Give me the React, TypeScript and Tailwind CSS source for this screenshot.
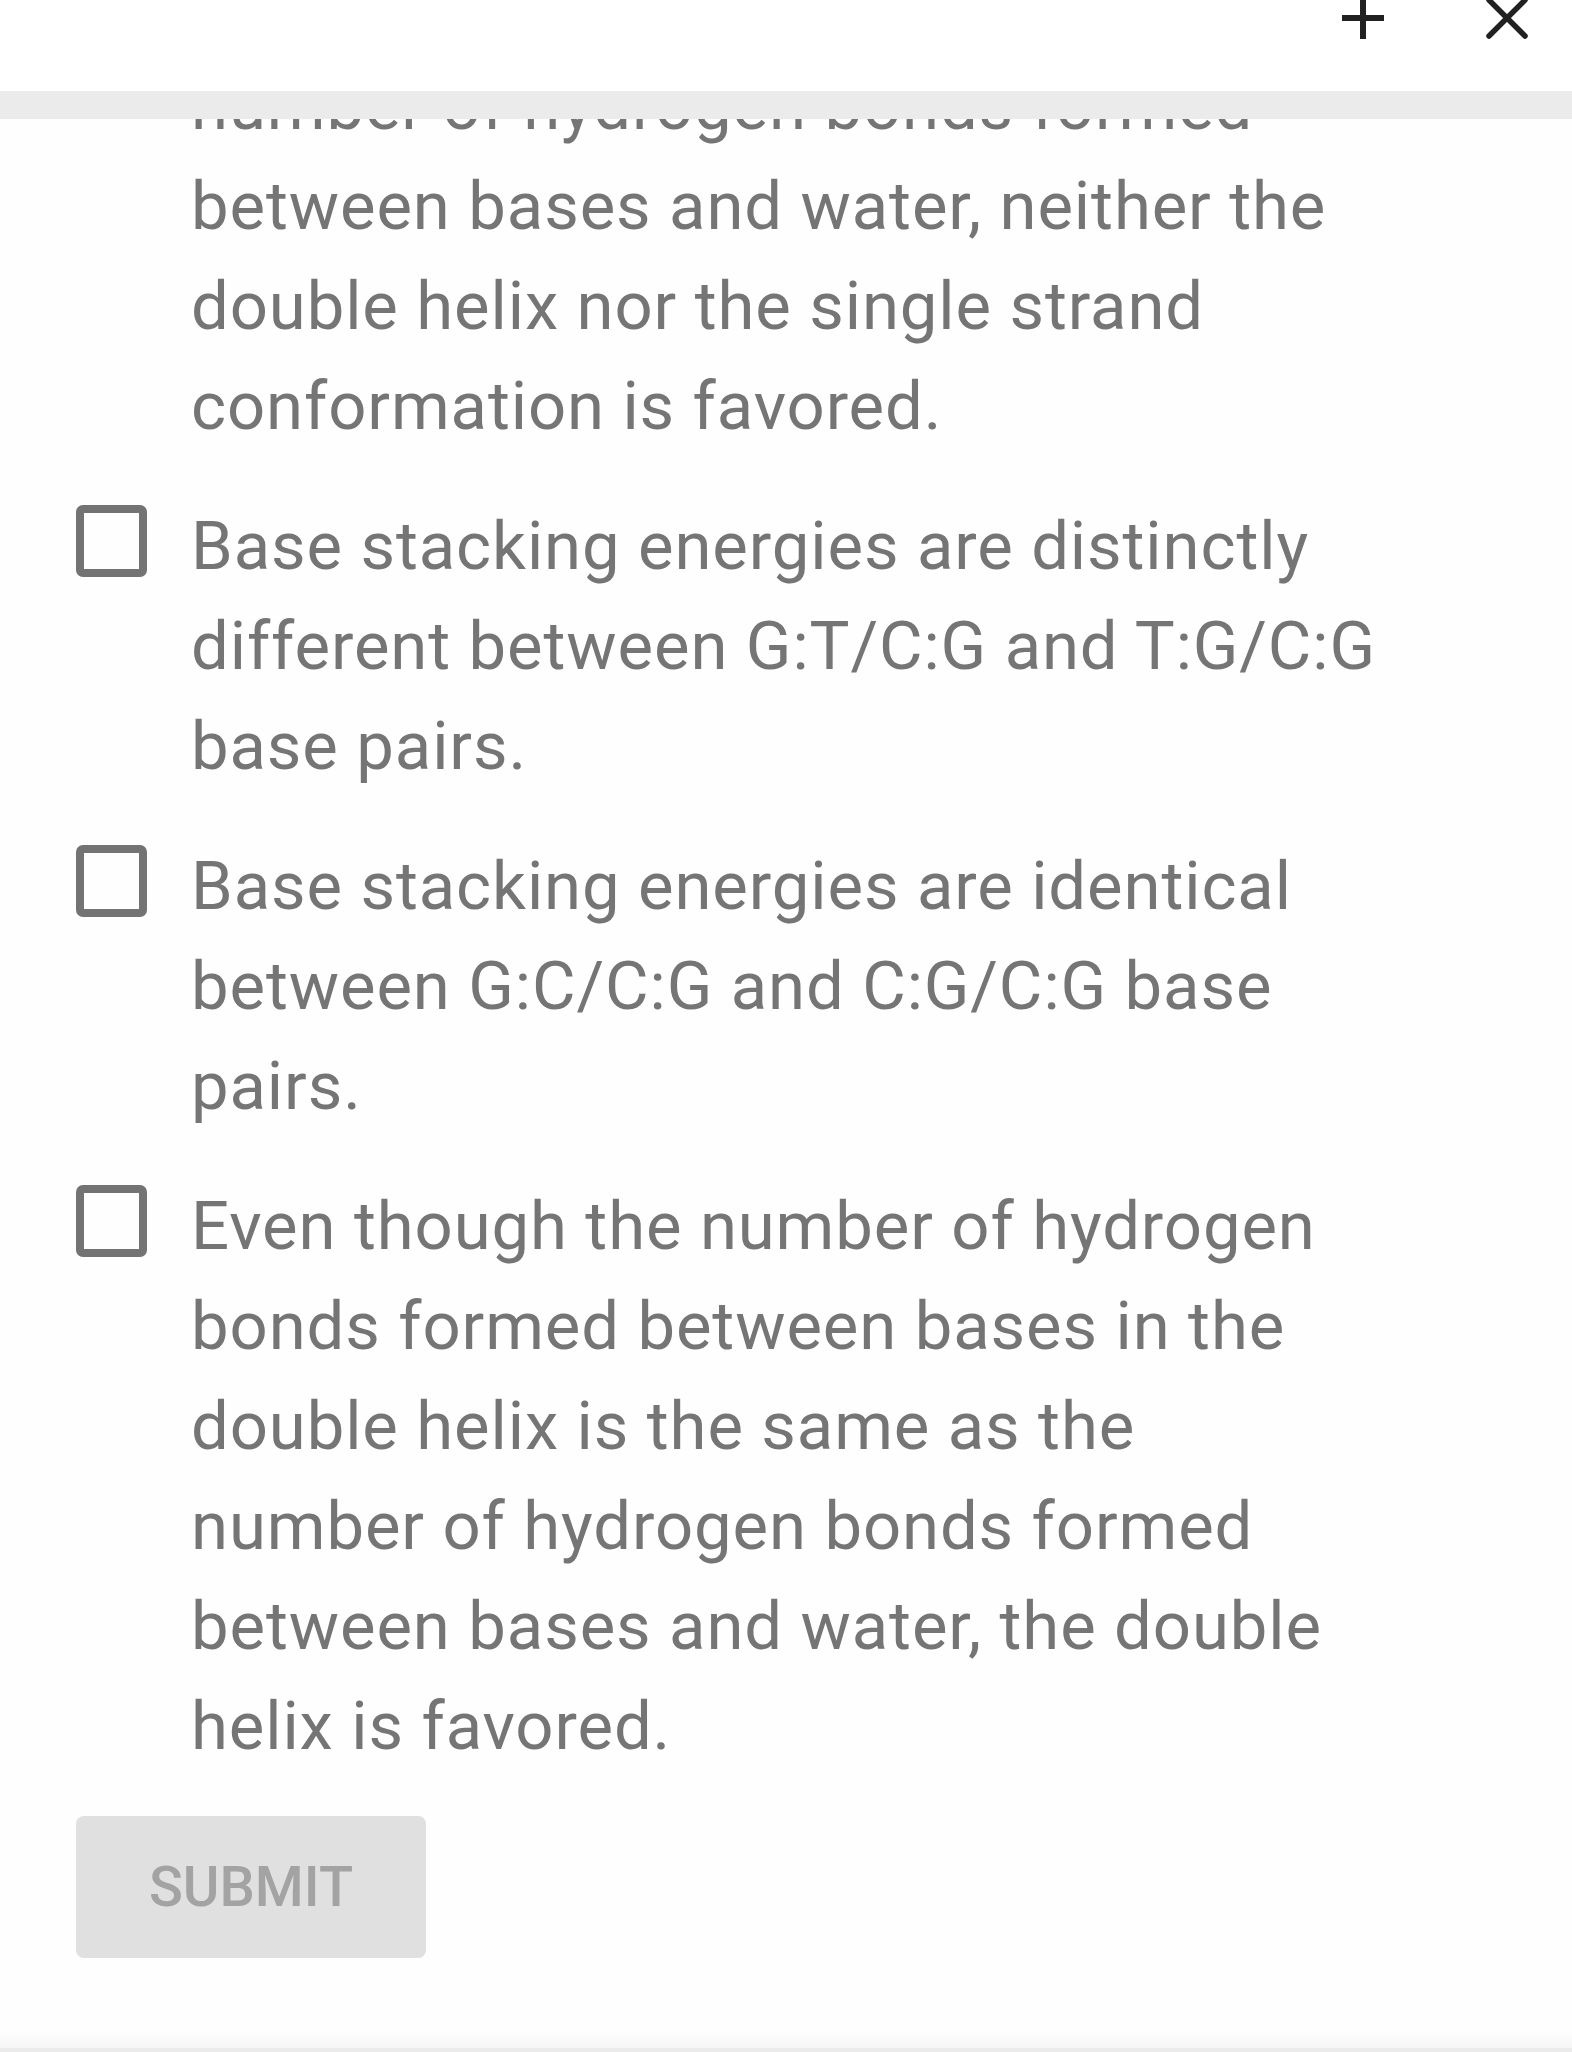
import React from "react"

const OPTIONS = [
  "Even though the number of hydrogen bonds formed between bases in the double helix is the same as the number of hydrogen bonds formed between bases and water, neither the double helix nor the single strand conformation is favored.",
  "Base stacking energies are distinctly different between G:T/C:G and T:G/C:G base pairs.",
  "Base stacking energies are identical between G:C/C:G and C:G/C:G base pairs.",
  "Even though the number of hydrogen bonds formed between bases in the double helix is the same as the number of hydrogen bonds formed between bases and water, the double helix is favored.",
]

function Checkbox() {
  return (
    <div className="mt-[9px] h-[72px] w-[71px] shrink-0 rounded-[7px] border-[8px] border-[#737373]" />
  )
}

function Option({ text }: { text: string }) {
  return (
    <label className="flex items-start gap-[44px]">
      <Checkbox />
      <span className="w-[1188px] text-[67px] leading-[100px] tracking-[0.9px] text-[#757575]">{text}</span>
    </label>
  )
}

export default function App() {
  return (
    <div
      className="relative h-[2052px] w-full overflow-hidden bg-[#fefefe]"
      style={{ fontFamily: "Roboto, 'Noto Sans', sans-serif" }}
    >
      {/* scrolled list, first lines sit under the toolbar */}
      <div className="mt-[-244px] flex flex-col gap-[40px] pl-[76px]">
        {OPTIONS.map((o, i) => (
          <Option key={i} text={o} />
        ))}
        <div>
          <button
            type="button"
            disabled
            className="h-[142px] w-[350px] rounded-[8px] bg-[#e0e0e0] text-[56px] font-medium text-[#a3a3a3]"
          >
            SUBMIT
          </button>
        </div>
      </div>

      {/* toolbar overlay */}
      <div className="absolute inset-x-0 top-0">
        <div className="relative h-[91px] bg-white">
          <svg className="absolute left-[1342px] top-[-3px]" width="42" height="42" viewBox="0 0 42 42">
            <path d="M0 21H42M21 0V42" stroke="#212121" strokeWidth="6" fill="none" />
          </svg>
          <svg className="absolute left-[1485px] top-[-4px]" width="44" height="44" viewBox="0 0 44 44">
            <path d="M4 4L40 40M40 4L4 40" stroke="#212121" strokeWidth="5.5" strokeLinecap="round" fill="none" />
          </svg>
        </div>
        <div className="h-[28px] bg-[#ebebeb]" />
      </div>

      {/* bottom edge */}
      <div className="absolute inset-x-0 bottom-0">
        <div className="h-[16px] bg-gradient-to-b from-[#fefefe] to-[#f5f5f5]" />
        <div className="h-[4px] bg-[#ebebeb]" />
      </div>
    </div>
  )
}
